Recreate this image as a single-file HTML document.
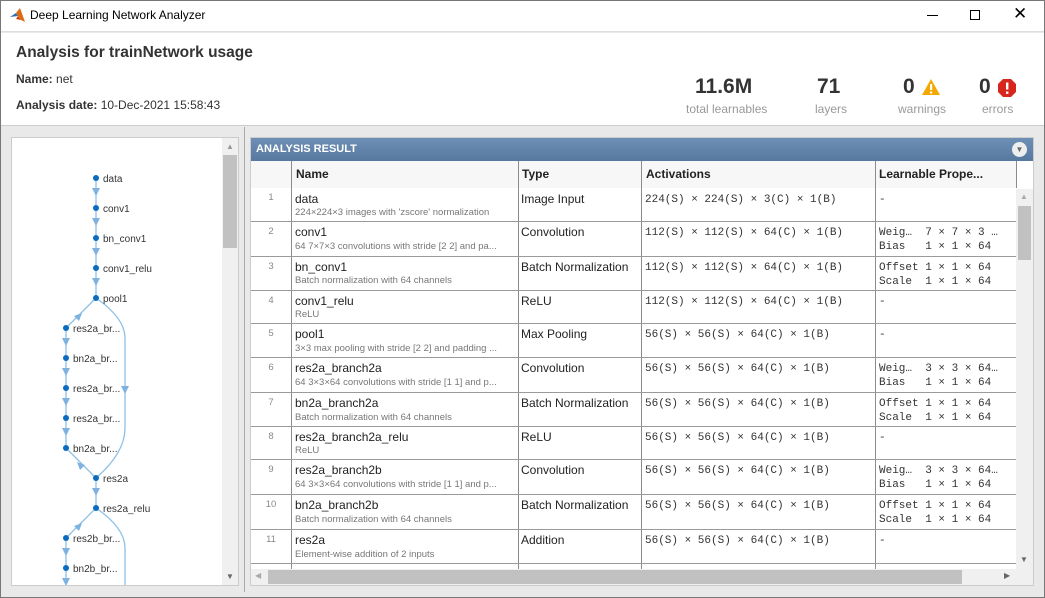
<!DOCTYPE html><html><head><style>
*{margin:0;padding:0;box-sizing:border-box}
body{width:1045px;height:598px;overflow:hidden;background:#f0f0f0;font-family:"Liberation Sans",sans-serif;position:relative;color:#222}
.a{position:absolute;white-space:nowrap}
.row{position:absolute;left:251px;width:765px;border-bottom:1px solid #9a9a9a;background:#fff}
.c{position:absolute;top:0;bottom:0;border-left:1px solid #8c8c8c}
.n{font-size:12px;color:#222}
.s{font-size:9.5px;color:#777}
.m{font-family:"Liberation Mono",monospace;font-size:11px;color:#333;white-space:pre;line-height:14px}
.i{font-size:9.5px;color:#888;width:40px;text-align:center}
</style></head><body>
<div class="a" style="left:0;top:0;width:1045px;height:598px;border:1px solid #777;background:#e9e9e9"></div>
<div class="a" style="left:1px;top:1px;width:1043px;height:31px;background:#fff;border-bottom:1px solid #ddd"></div>
<svg class="a" style="left:9px;top:8px" width="18" height="16"><path d="M1 9 L7 5 L9 8 Z" fill="#2a6fb0"/><path d="M7 5 L11 0 L16 14 L12 12 Z" fill="#e06a10"/><path d="M9 8 L12 12 L7 11Z" fill="#c84010"/></svg>
<div class="a" style="left:30px;top:8px;font-size:12px;color:#000">Deep Learning Network Analyzer</div>
<div class="a" style="left:927px;top:15px;width:11px;height:1px;background:#000"></div>
<div class="a" style="left:970px;top:10px;width:10px;height:10px;border:1px solid #000"></div>
<div class="a" style="left:1013px;top:4px;font-size:17px;color:#000;font-weight:300">✕</div>
<div class="a" style="left:1px;top:33px;width:1043px;height:93px;background:#fff;border-bottom:1px solid #ccc"></div>
<div class="a" style="left:16px;top:44px;font-size:15.5px;font-weight:bold;color:#333">Analysis for trainNetwork usage</div>
<div class="a" style="left:16px;top:72px;font-size:12px;color:#333"><b>Name:</b> net</div>
<div class="a" style="left:16px;top:98px;font-size:12px;color:#333"><b>Analysis date:</b> 10-Dec-2021 15:58:43</div>
<div class="a" style="left:695px;top:75px;font-size:21px;font-weight:bold;color:#333">11.6M</div>
<div class="a" style="left:686px;top:102px;font-size:12px;color:#999">total learnables</div>
<div class="a" style="left:817px;top:75px;font-size:21px;font-weight:bold;color:#333">71</div>
<div class="a" style="left:815px;top:102px;font-size:12px;color:#999">layers</div>
<div class="a" style="left:903px;top:75px;font-size:21px;font-weight:bold;color:#333">0</div>
<svg class="a" style="left:921px;top:78px" width="20" height="18"><path d="M10 1 L19 17 L1 17Z" fill="#f5a800"/><rect x="9" y="6" width="2.2" height="6" fill="#fff"/><rect x="9" y="13.5" width="2.2" height="2" fill="#fff"/></svg>
<div class="a" style="left:898px;top:102px;font-size:12px;color:#999">warnings</div>
<div class="a" style="left:979px;top:75px;font-size:21px;font-weight:bold;color:#333">0</div>
<svg class="a" style="left:997px;top:78px" width="20" height="20"><path d="M6 1 H14 L19 6 V14 L14 19 H6 L1 14 V6Z" fill="#d7261e"/><rect x="9" y="4.5" width="2.4" height="7" fill="#fff"/><rect x="9" y="13.5" width="2.4" height="2.4" fill="#fff"/></svg>
<div class="a" style="left:982px;top:102px;font-size:12px;color:#999">errors</div>
<div class="a" style="left:244px;top:127px;width:1px;height:465px;background:#aaa"></div>
<div class="a" style="left:11px;top:137px;width:228px;height:449px;background:#fff;border:1px solid #ccc"></div>
<div class="a" style="left:222px;top:138px;width:16px;height:447px;background:#f0f0f0"></div>
<div class="a" style="left:223px;top:155px;width:14px;height:93px;background:#c1c1c1"></div>
<div class="a" style="left:226px;top:142px;font-size:8px;color:#999">▲</div>
<div class="a" style="left:226px;top:572px;font-size:8px;color:#666">▼</div>
<svg class="a" style="left:12px;top:138px" width="210" height="447">
<g stroke="#8ec0e6" stroke-width="1.3" fill="none">
<path d="M84 40 V160"/><path d="M84 160 L54 190 V310 L84 340 V370 L54 400 V447"/>
<path d="M84 160 Q113 180 113 200 V290 Q113 315 84 340"/><path d="M84 370 Q113 390 113 410 V447"/>
</g>
<g fill="#7fb3df">
<path d="M80 50 h8 l-4 8z M80 80 h8 l-4 8z M80 110 h8 l-4 8z M80 140 h8 l-4 8z M80 350 h8 l-4 8z"/>
<path d="M50 200 h8 l-4 8z M50 230 h8 l-4 8z M50 260 h8 l-4 8z M50 290 h8 l-4 8z M50 410 h8 l-4 8z M50 440 h8 l-4 8z M109 248 h8 l-4 8z"/>
<path d="M62 178 l8 -3 l-3 8z M73 327 l-8 -3 l3 8z M62 388 l8 -3 l-3 8z"/>
</g>
<g fill="#0a6cc0">
<circle cx="84" cy="40" r="3"/><circle cx="84" cy="70" r="3"/><circle cx="84" cy="100" r="3"/><circle cx="84" cy="130" r="3"/><circle cx="84" cy="160" r="3"/>
<circle cx="54" cy="190" r="3"/><circle cx="54" cy="220" r="3"/><circle cx="54" cy="250" r="3"/><circle cx="54" cy="280" r="3"/><circle cx="54" cy="310" r="3"/>
<circle cx="84" cy="340" r="3"/><circle cx="84" cy="370" r="3"/><circle cx="54" cy="400" r="3"/><circle cx="54" cy="430" r="3"/>
</g>
<g font-family="Liberation Sans" font-size="10" fill="#333">
<text x="91" y="44">data</text><text x="91" y="74">conv1</text><text x="91" y="104">bn_conv1</text><text x="91" y="134">conv1_relu</text><text x="91" y="164">pool1</text>
<text x="61" y="194">res2a_br...</text><text x="61" y="224">bn2a_br...</text><text x="61" y="254">res2a_br...</text><text x="61" y="284">res2a_br...</text><text x="61" y="314">bn2a_br...</text>
<text x="91" y="344">res2a</text><text x="91" y="374">res2a_relu</text><text x="61" y="404">res2b_br...</text><text x="61" y="434">bn2b_br...</text>
</g></svg>
<div class="a" style="left:250px;top:137px;width:784px;height:449px;background:#fff;border:1px solid #ccc"></div>
<div class="a" style="left:251px;top:138px;width:782px;height:23px;background:linear-gradient(#6f90b6,#57789f)"></div>
<div class="a" style="left:256px;top:143px;font-size:11px;font-weight:bold;color:#fff">ANALYSIS RESULT</div>
<div class="a" style="left:1012px;top:142px;width:15px;height:15px;border-radius:50%;background:#eee;font-size:8px;color:#666;text-align:center;line-height:15px">▼</div>
<div class="row" style="top:161px;height:28px;background:#f7f7f7;border-bottom:1px solid #888">
<div class="c" style="left:40px"></div><div class="c" style="left:267px"></div><div class="c" style="left:390px"></div><div class="c" style="left:624px"></div><div class="c" style="left:765px"></div>
<div class="a" style="left:45px;top:6px;font-size:12px;font-weight:bold">Name</div><div class="a" style="left:271px;top:6px;font-size:12px;font-weight:bold">Type</div><div class="a" style="left:395px;top:6px;font-size:12px;font-weight:bold">Activations</div><div class="a" style="left:628px;top:6px;font-size:12px;font-weight:bold">Learnable Prope...</div></div>
<div class="row" style="top:188px;height:34px"><div class="c" style="left:40px"></div><div class="c" style="left:267px"></div><div class="c" style="left:390px"></div><div class="c" style="left:624px"></div><div class="a i" style="top:4px">1</div><div class="a n" style="left:44px;top:4px">data</div><div class="a s" style="left:44px;top:19px">224×224×3 images with 'zscore' normalization</div><div class="a n" style="left:270px;top:4px">Image Input</div><div class="a m" style="left:394px;top:5px">224(S) × 224(S) × 3(C) × 1(B)</div><div class="a m" style="left:628px;top:5px">-</div></div>
<div class="row" style="top:222px;height:35px"><div class="c" style="left:40px"></div><div class="c" style="left:267px"></div><div class="c" style="left:390px"></div><div class="c" style="left:624px"></div><div class="a i" style="top:4px">2</div><div class="a n" style="left:44px;top:3px">conv1</div><div class="a s" style="left:44px;top:19px">64 7×7×3 convolutions with stride [2 2] and pa...</div><div class="a n" style="left:270px;top:3px">Convolution</div><div class="a m" style="left:394px;top:4px">112(S) × 112(S) × 64(C) × 1(B)</div><div class="a m" style="left:628px;top:4px">Weig…  7 × 7 × 3 …
Bias   1 × 1 × 64</div></div>
<div class="row" style="top:257px;height:34px"><div class="c" style="left:40px"></div><div class="c" style="left:267px"></div><div class="c" style="left:390px"></div><div class="c" style="left:624px"></div><div class="a i" style="top:4px">3</div><div class="a n" style="left:44px;top:3px">bn_conv1</div><div class="a s" style="left:44px;top:18px">Batch normalization with 64 channels</div><div class="a n" style="left:270px;top:3px">Batch Normalization</div><div class="a m" style="left:394px;top:4px">112(S) × 112(S) × 64(C) × 1(B)</div><div class="a m" style="left:628px;top:4px">Offset 1 × 1 × 64
Scale  1 × 1 × 64</div></div>
<div class="row" style="top:291px;height:33px"><div class="c" style="left:40px"></div><div class="c" style="left:267px"></div><div class="c" style="left:390px"></div><div class="c" style="left:624px"></div><div class="a i" style="top:4px">4</div><div class="a n" style="left:44px;top:3px">conv1_relu</div><div class="a s" style="left:44px;top:18px">ReLU</div><div class="a n" style="left:270px;top:3px">ReLU</div><div class="a m" style="left:394px;top:4px">112(S) × 112(S) × 64(C) × 1(B)</div><div class="a m" style="left:628px;top:4px">-</div></div>
<div class="row" style="top:324px;height:34px"><div class="c" style="left:40px"></div><div class="c" style="left:267px"></div><div class="c" style="left:390px"></div><div class="c" style="left:624px"></div><div class="a i" style="top:4px">5</div><div class="a n" style="left:44px;top:3px">pool1</div><div class="a s" style="left:44px;top:19px">3×3 max pooling with stride [2 2] and padding ...</div><div class="a n" style="left:270px;top:3px">Max Pooling</div><div class="a m" style="left:394px;top:4px">56(S) × 56(S) × 64(C) × 1(B)</div><div class="a m" style="left:628px;top:4px">-</div></div>
<div class="row" style="top:358px;height:35px"><div class="c" style="left:40px"></div><div class="c" style="left:267px"></div><div class="c" style="left:390px"></div><div class="c" style="left:624px"></div><div class="a i" style="top:4px">6</div><div class="a n" style="left:44px;top:3px">res2a_branch2a</div><div class="a s" style="left:44px;top:19px">64 3×3×64 convolutions with stride [1 1] and p...</div><div class="a n" style="left:270px;top:3px">Convolution</div><div class="a m" style="left:394px;top:4px">56(S) × 56(S) × 64(C) × 1(B)</div><div class="a m" style="left:628px;top:4px">Weig…  3 × 3 × 64…
Bias   1 × 1 × 64</div></div>
<div class="row" style="top:393px;height:34px"><div class="c" style="left:40px"></div><div class="c" style="left:267px"></div><div class="c" style="left:390px"></div><div class="c" style="left:624px"></div><div class="a i" style="top:4px">7</div><div class="a n" style="left:44px;top:3px">bn2a_branch2a</div><div class="a s" style="left:44px;top:19px">Batch normalization with 64 channels</div><div class="a n" style="left:270px;top:3px">Batch Normalization</div><div class="a m" style="left:394px;top:4px">56(S) × 56(S) × 64(C) × 1(B)</div><div class="a m" style="left:628px;top:4px">Offset 1 × 1 × 64
Scale  1 × 1 × 64</div></div>
<div class="row" style="top:427px;height:33px"><div class="c" style="left:40px"></div><div class="c" style="left:267px"></div><div class="c" style="left:390px"></div><div class="c" style="left:624px"></div><div class="a i" style="top:4px">8</div><div class="a n" style="left:44px;top:3px">res2a_branch2a_relu</div><div class="a s" style="left:44px;top:18px">ReLU</div><div class="a n" style="left:270px;top:3px">ReLU</div><div class="a m" style="left:394px;top:4px">56(S) × 56(S) × 64(C) × 1(B)</div><div class="a m" style="left:628px;top:4px">-</div></div>
<div class="row" style="top:460px;height:35px"><div class="c" style="left:40px"></div><div class="c" style="left:267px"></div><div class="c" style="left:390px"></div><div class="c" style="left:624px"></div><div class="a i" style="top:4px">9</div><div class="a n" style="left:44px;top:3px">res2a_branch2b</div><div class="a s" style="left:44px;top:19px">64 3×3×64 convolutions with stride [1 1] and p...</div><div class="a n" style="left:270px;top:3px">Convolution</div><div class="a m" style="left:394px;top:4px">56(S) × 56(S) × 64(C) × 1(B)</div><div class="a m" style="left:628px;top:4px">Weig…  3 × 3 × 64…
Bias   1 × 1 × 64</div></div>
<div class="row" style="top:495px;height:35px"><div class="c" style="left:40px"></div><div class="c" style="left:267px"></div><div class="c" style="left:390px"></div><div class="c" style="left:624px"></div><div class="a i" style="top:4px">10</div><div class="a n" style="left:44px;top:3px">bn2a_branch2b</div><div class="a s" style="left:44px;top:19px">Batch normalization with 64 channels</div><div class="a n" style="left:270px;top:3px">Batch Normalization</div><div class="a m" style="left:394px;top:4px">56(S) × 56(S) × 64(C) × 1(B)</div><div class="a m" style="left:628px;top:4px">Offset 1 × 1 × 64
Scale  1 × 1 × 64</div></div>
<div class="row" style="top:530px;height:34px"><div class="c" style="left:40px"></div><div class="c" style="left:267px"></div><div class="c" style="left:390px"></div><div class="c" style="left:624px"></div><div class="a i" style="top:4px">11</div><div class="a n" style="left:44px;top:3px">res2a</div><div class="a s" style="left:44px;top:19px">Element-wise addition of 2 inputs</div><div class="a n" style="left:270px;top:3px">Addition</div><div class="a m" style="left:394px;top:4px">56(S) × 56(S) × 64(C) × 1(B)</div><div class="a m" style="left:628px;top:4px">-</div></div>
<div class="row" style="top:564px;height:5px;border:none"><div class="c" style="left:40px"></div><div class="c" style="left:267px"></div><div class="c" style="left:390px"></div><div class="c" style="left:624px"></div></div>
<div class="a" style="left:1016px;top:189px;width:17px;height:380px;background:#f0f0f0"></div>
<div class="a" style="left:1018px;top:206px;width:13px;height:54px;background:#c1c1c1"></div>
<div class="a" style="left:1020px;top:192px;font-size:8px;color:#aaa">▲</div>
<div class="a" style="left:1020px;top:555px;font-size:8px;color:#666">▼</div>
<div class="a" style="left:251px;top:569px;width:782px;height:16px;background:#f0f0f0"></div>
<div class="a" style="left:268px;top:570px;width:694px;height:14px;background:#c1c1c1"></div>
<div class="a" style="left:255px;top:571px;font-size:8px;color:#aaa">◀</div>
<div class="a" style="left:1004px;top:571px;font-size:8px;color:#666">▶</div>
</body></html>
